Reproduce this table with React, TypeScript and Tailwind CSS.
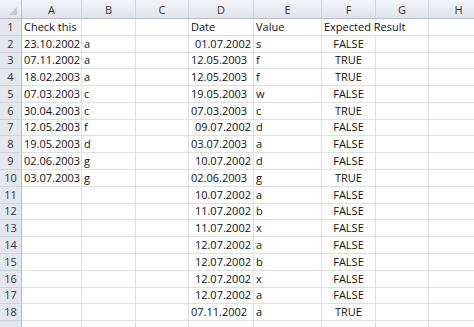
import React from "react";

type Align = "l" | "r" | "c";
type Cell = { t: string; a?: Align } | null;

const rows: Cell[][] = [
  [{ t: "Check this" }, null, null, { t: "Date" }, { t: "Value" }, { t: "Expected Result" }, null, null],
  [{ t: "23.10.2002" }, { t: "a" }, null, { t: "01.07.2002", a: "r" }, { t: "s" }, { t: "FALSE", a: "c" }, null, null],
  [{ t: "07.11.2002" }, { t: "a" }, null, { t: "12.05.2003" }, { t: "f" }, { t: "TRUE", a: "c" }, null, null],
  [{ t: "18.02.2003" }, { t: "a" }, null, { t: "12.05.2003" }, { t: "f" }, { t: "TRUE", a: "c" }, null, null],
  [{ t: "07.03.2003" }, { t: "c" }, null, { t: "19.05.2003" }, { t: "w" }, { t: "FALSE", a: "c" }, null, null],
  [{ t: "30.04.2003" }, { t: "c" }, null, { t: "07.03.2003" }, { t: "c" }, { t: "TRUE", a: "c" }, null, null],
  [{ t: "12.05.2003" }, { t: "f" }, null, { t: "09.07.2002", a: "r" }, { t: "d" }, { t: "FALSE", a: "c" }, null, null],
  [{ t: "19.05.2003" }, { t: "d" }, null, { t: "03.07.2003" }, { t: "a" }, { t: "FALSE", a: "c" }, null, null],
  [{ t: "02.06.2003" }, { t: "g" }, null, { t: "10.07.2002", a: "r" }, { t: "d" }, { t: "FALSE", a: "c" }, null, null],
  [{ t: "03.07.2003" }, { t: "g" }, null, { t: "02.06.2003" }, { t: "g" }, { t: "TRUE", a: "c" }, null, null],
  [null, null, null, { t: "10.07.2002", a: "r" }, { t: "a" }, { t: "FALSE", a: "c" }, null, null],
  [null, null, null, { t: "11.07.2002", a: "r" }, { t: "b" }, { t: "FALSE", a: "c" }, null, null],
  [null, null, null, { t: "11.07.2002", a: "r" }, { t: "x" }, { t: "FALSE", a: "c" }, null, null],
  [null, null, null, { t: "12.07.2002", a: "r" }, { t: "a" }, { t: "FALSE", a: "c" }, null, null],
  [null, null, null, { t: "12.07.2002", a: "r" }, { t: "b" }, { t: "FALSE", a: "c" }, null, null],
  [null, null, null, { t: "12.07.2002", a: "r" }, { t: "x" }, { t: "FALSE", a: "c" }, null, null],
  [null, null, null, { t: "12.07.2002", a: "r" }, { t: "a" }, { t: "FALSE", a: "c" }, null, null],
  [null, null, null, { t: "07.11.2002" }, { t: "a" }, { t: "TRUE", a: "c" }, null, null],
  [null, null, null, null, null, null, null, null],
];

const cols = ["A", "B", "C", "D", "E", "F", "G", "H"];

export default function App() {
  return (
    <div
      className="w-[474px] h-[327px] overflow-hidden bg-white text-[11px] text-[#111]"
      style={{ fontFamily: '"Open Sans", "Liberation Sans", sans-serif' }}
    >
      <div className="grid grid-cols-[22px_60px_54px_53px_65px_68px_54px_53px_60px] grid-rows-[19px_17px_17px_16px_17px_17px_17px_16px_17px_17px_17px_17px_16px_17px_17px_17px_17px_16px_17px_17px]">
        <div className="relative border-r border-b border-[#b9bec6] bg-gradient-to-b from-[#f3f5f8] to-[#dfe3e9]">
          <div className="absolute right-[4px] bottom-[3px] w-0 h-0 border-l-[8px] border-l-transparent border-b-[8px] border-b-[#c5cad1]" />
        </div>
        {cols.map((c) => (
          <div
            key={c}
            className="flex items-center justify-center border-r border-b border-r-[#cfd3d9] border-b-[#b9bec6] bg-gradient-to-b from-[#f3f5f8] to-[#dfe3e9] text-[#333] leading-none pt-[1px]"
          >
            {c}
          </div>
        ))}
        {rows.map((r, i) => (
          <React.Fragment key={i}>
            <div className="flex items-end justify-center pb-[2px] leading-[13px] border-r border-b border-r-[#b9bec6] border-b-[#cfd3d9] bg-[#e4e8ee] text-[#333]">
              {i < 18 ? i + 1 : null}
            </div>
            {r.map((cell, j) => {
              const overflow = i === 0 && j === 5;
              const align =
                cell?.a === "r" ? "justify-end" : cell?.a === "c" ? "justify-center" : "justify-start";
              return (
                <div
                  key={j}
                  className={`relative flex items-end px-[2px] pb-[2px] leading-[13px] whitespace-nowrap border-b border-[#dcdfe3] ${
                    overflow ? "overflow-visible z-10" : "border-r"
                  } ${align}`}
                >
                  {cell ? <span>{cell.t}</span> : null}
                </div>
              );
            })}
          </React.Fragment>
        ))}
      </div>
    </div>
  );
}
